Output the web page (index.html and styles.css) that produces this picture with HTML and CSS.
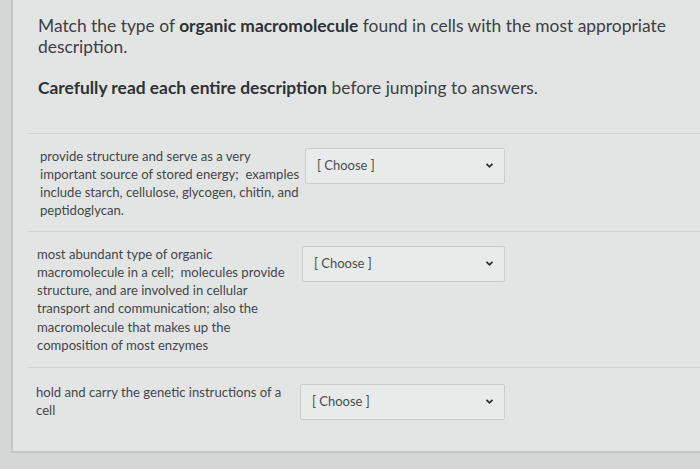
FILE: index.html
```html
<!DOCTYPE html>
<html>
	<head>
		<meta charset="UTF-8">
		<title>Quiz question</title>
		<link rel="stylesheet" href="styles.css">
	</head>
	<body>
		<div class="panel">
			<div class="prompt">
				<p>Match the type of <b>organic macromolecule</b> found in cells with the most appropriate description.</p>
				<p><b>Carefully read each entire description</b> before jumping to answers.</p>
			</div>
			<div class="matches">
				<div class="row row1">
					<div class="desc">provide structure and serve as a very important source of stored energy;&nbsp; examples include starch, cellulose, glycogen, chitin, and peptidoglycan.</div>
					<div class="select">
						<span>[ Choose ]</span>
						<svg width="9" height="7" viewBox="0 0 9 7"><path d="M1.5 1.8 L4.5 4.8 L7.5 1.8" fill="none" stroke="#2d3133" stroke-width="1.8"/></svg>
					</div>
				</div>
				<div class="row row2">
					<div class="desc">most abundant type of organic macromolecule in a cell;&nbsp; molecules provide structure, and are involved in cellular transport and communication; also the macromolecule that makes up the composition of most enzymes</div>
					<div class="select">
						<span>[ Choose ]</span>
						<svg width="9" height="7" viewBox="0 0 9 7"><path d="M1.5 1.8 L4.5 4.8 L7.5 1.8" fill="none" stroke="#2d3133" stroke-width="1.8"/></svg>
					</div>
				</div>
				<div class="row row3">
					<div class="desc">hold and carry the genetic instructions of a cell</div>
					<div class="select">
						<span>[ Choose ]</span>
						<svg width="9" height="7" viewBox="0 0 9 7"><path d="M1.5 1.8 L4.5 4.8 L7.5 1.8" fill="none" stroke="#2d3133" stroke-width="1.8"/></svg>
					</div>
				</div>
			</div>
		</div>
	</body>
</html>
```
FILE: styles.css
```css
* {margin: 0; padding: 0; box-sizing: border-box;}
body {
	background: #d5d7d6;
	font-family: Lato, "Open Sans", sans-serif;
	color: #3b3e40;
	overflow: hidden;
}
.panel {
	margin-left: 11px;
	height: 453px;
	background: #e3e5e4;
	border-left: 2px solid #c6c8c7;
	border-bottom: 2px solid #c3c5c4;
	padding-top: 15px;
}
.prompt {
	padding-left: 25px;
	padding-right: 10px;
	font-size: 17.4px;
	line-height: 21px;
	color: #3d4042;
}
.prompt p + p {margin-top: 19.5px;}
.prompt b {color: #2f3234;}
.matches {
	margin-left: 15px;
	margin-top: 35px;
}
.row {
	display: flex;
	align-items: flex-start;
	border-top: 1px solid #cfd2d1;
}
.row1 {padding: 13px 0 0 12px; height: 98px;}
.row2 {padding: 13px 0 0 9px; height: 136px;}
.row3 {padding: 15px 0 0 8px;}
.desc {
	width: 258px;
	font-size: 13.1px;
	line-height: 18.3px;
	color: #44474a;
}
.row1 .desc {width: 264px;}
.select {
	height: 36px;
	background: #e9ebea;
	border: 1px solid #c9cccb;
	border-radius: 2px;
	display: flex;
	align-items: center;
	justify-content: space-between;
	padding: 0 10px 0 11px;
	font-size: 13px;
	color: #4a4d50;
}
.row1 .select {width: 200px; margin: 1px 0 0 1px;}
.row2 .select {width: 203px; margin: 1px 0 0 7px;}
.row3 .select {width: 205px; margin: 1px 0 0 6px;}
.select span {margin-top: -2px;}
```
